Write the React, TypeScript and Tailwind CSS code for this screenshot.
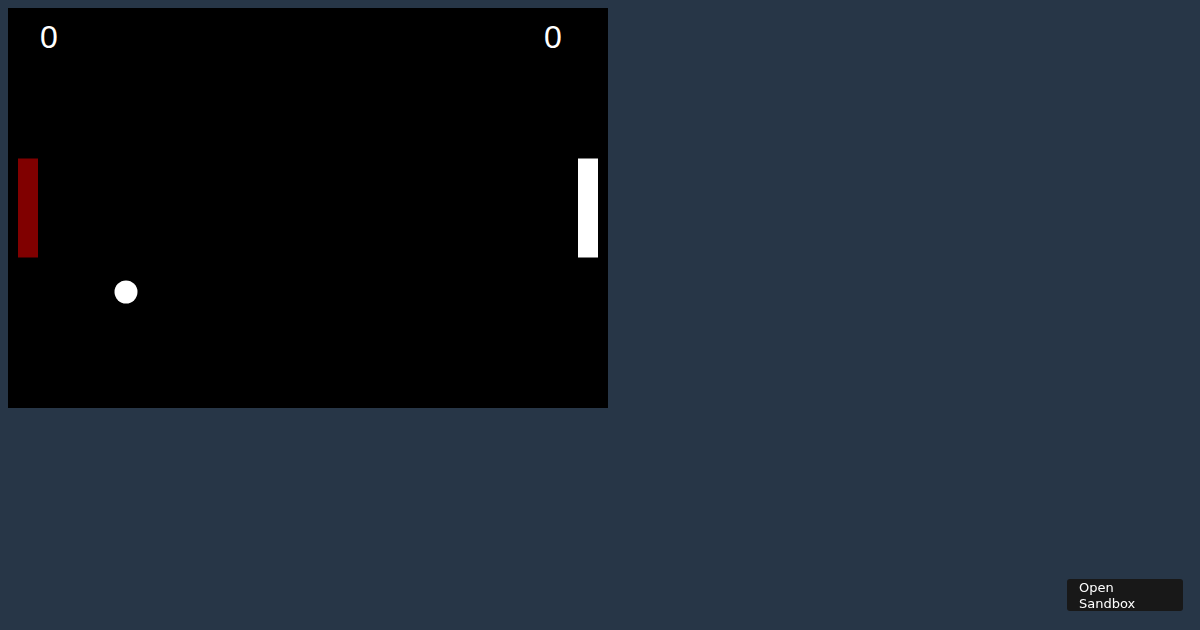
import React from 'react'

const W = 600
const H = 400

const game = {
  left: { x: 10, y: 150.5, w: 20, h: 99, color: '#800000' },
  right: { x: 570, y: 150.5, w: 20, h: 99, color: '#ffffff' },
  ball: { x: 118, y: 284, r: 11.5 },
  scores: [0, 0],
}

function PongCanvas() {
  const { left, right, ball, scores } = game
  return (
    <svg width={W} height={H} viewBox={`0 0 ${W} ${H}`} className="block bg-black">
      <text x={32} y={40} fill="#fff" fontSize={32} fontFamily='"Liberation Sans", Arial, sans-serif'>
        {scores[0]}
      </text>
      <text x={536} y={40} fill="#fff" fontSize={32} fontFamily='"Liberation Sans", Arial, sans-serif'>
        {scores[1]}
      </text>
      <rect x={left.x} y={left.y} width={left.w} height={left.h} fill={left.color} />
      <rect x={right.x} y={right.y} width={right.w} height={right.h} fill={right.color} />
      <circle cx={ball.x} cy={ball.y} r={ball.r} fill="#fff" />
    </svg>
  )
}

export default function App() {
  return (
    <div className="min-h-screen w-full bg-[#273647] p-2 font-['DejaVu_Sans',sans-serif]">
      <PongCanvas />
      <button className="fixed bottom-[19px] right-[17px] flex h-[32px] w-[116px] items-center rounded-[3px] bg-[#181818] px-3 pt-[2px] text-left text-[13px] leading-[16px] text-white">
        <span className="w-[70px]">Open Sandbox</span>
      </button>
    </div>
  )
}
